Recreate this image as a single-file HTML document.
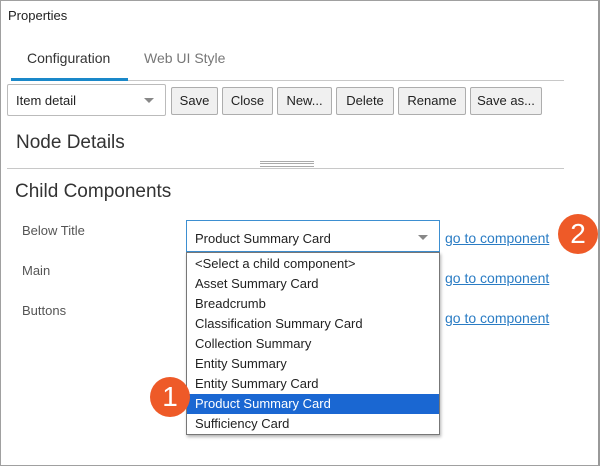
<!DOCTYPE html>
<html><head><style>
body{margin:0;width:602px;height:467px;background:#fff;font-family:"Liberation Sans",sans-serif;font-size:13px;color:#222;position:relative;overflow:hidden}
.a{position:absolute}
.frame{left:0;top:0;width:597px;height:464px;border:1px solid #a0a0a0;border-right:2px solid #999}
.btn{top:87px;height:28px;border:1px solid #adadad;background:#f0f0f0;border-radius:2px;box-sizing:border-box;text-align:center;line-height:26px;font-size:13px}
.lbl{left:22px;color:#555;font-size:13px}
.lnk{left:445px;color:#2a7cc4;text-decoration:underline;font-size:14px}
.dd div{height:20px;line-height:20px;padding-left:8px}
.badge{width:40px;height:40px;border-radius:50%;background:#ee5a28;color:#fff;font-size:28px;text-align:center;line-height:40px}
</style></head><body>
<div class="a frame"></div>
<div class="a" style="left:8px;top:8px">Properties</div>
<div class="a" style="left:27px;top:50px;font-size:14px;color:#333">Configuration</div>
<div class="a" style="left:144px;top:50px;font-size:14px;color:#777">Web UI Style</div>
<div class="a" style="left:11px;top:80px;width:553px;height:1px;background:#c8c8c8"></div>
<div class="a" style="left:11px;top:78px;width:117px;height:3px;background:#1a88c9"></div>
<div class="a" style="left:7px;top:84px;width:159px;height:32px;border:1px solid #bbb;box-sizing:border-box;border-radius:2px"></div>
<div class="a" style="left:16px;top:93px">Item detail</div>
<div class="a" style="left:144px;top:98px;border-left:5px solid transparent;border-right:5px solid transparent;border-top:5px solid #888"></div>
<div class="a btn" style="left:171px;width:47px">Save</div>
<div class="a btn" style="left:222px;width:51px">Close</div>
<div class="a btn" style="left:277px;width:55px">New...</div>
<div class="a btn" style="left:336px;width:58px">Delete</div>
<div class="a btn" style="left:398px;width:68px">Rename</div>
<div class="a btn" style="left:470px;width:72px">Save as...</div>
<div class="a" style="left:16px;top:132px;font-size:19px;color:#333">Node Details</div>
<div class="a" style="left:260px;top:161px;width:54px;height:4px;border-top:1px solid #aaa;border-bottom:1px solid #aaa"></div>
<div class="a" style="left:260px;top:163px;width:54px;height:1px;background:#aaa"></div>
<div class="a" style="left:7px;top:168px;width:557px;height:1px;background:#c8c8c8"></div>
<div class="a" style="left:15px;top:181px;font-size:19px;color:#333">Child Components</div>
<div class="a lbl" style="top:223px">Below Title</div>
<div class="a lbl" style="top:263px">Main</div>
<div class="a lbl" style="top:303px">Buttons</div>
<div class="a" style="left:186px;top:220px;width:254px;height:32px;border:1px solid #3d8fd1;box-sizing:border-box"></div>
<div class="a" style="left:195px;top:231px">Product Summary Card</div>
<div class="a" style="left:418px;top:235px;border-left:5px solid transparent;border-right:5px solid transparent;border-top:5px solid #888"></div>
<div class="a lnk" style="top:230px">go to component</div>
<div class="a lnk" style="top:270px">go to component</div>
<div class="a lnk" style="top:310px">go to component</div>
<div class="a dd" style="left:186px;top:252px;width:252px;border:1px solid #777;background:#fff;box-shadow:1px 2px 3px rgba(0,0,0,.3);padding-top:1px">
<div>&lt;Select a child component&gt;</div><div>Asset Summary Card</div><div>Breadcrumb</div><div>Classification Summary Card</div><div>Collection Summary</div><div>Entity Summary</div><div>Entity Summary Card</div><div style="background:#1a67d2;color:#fff">Product Summary Card</div><div>Sufficiency Card</div></div>
<div class="a badge" style="left:558px;top:214px">2</div>
<div class="a badge" style="left:150px;top:377px">1</div>
</body></html>
